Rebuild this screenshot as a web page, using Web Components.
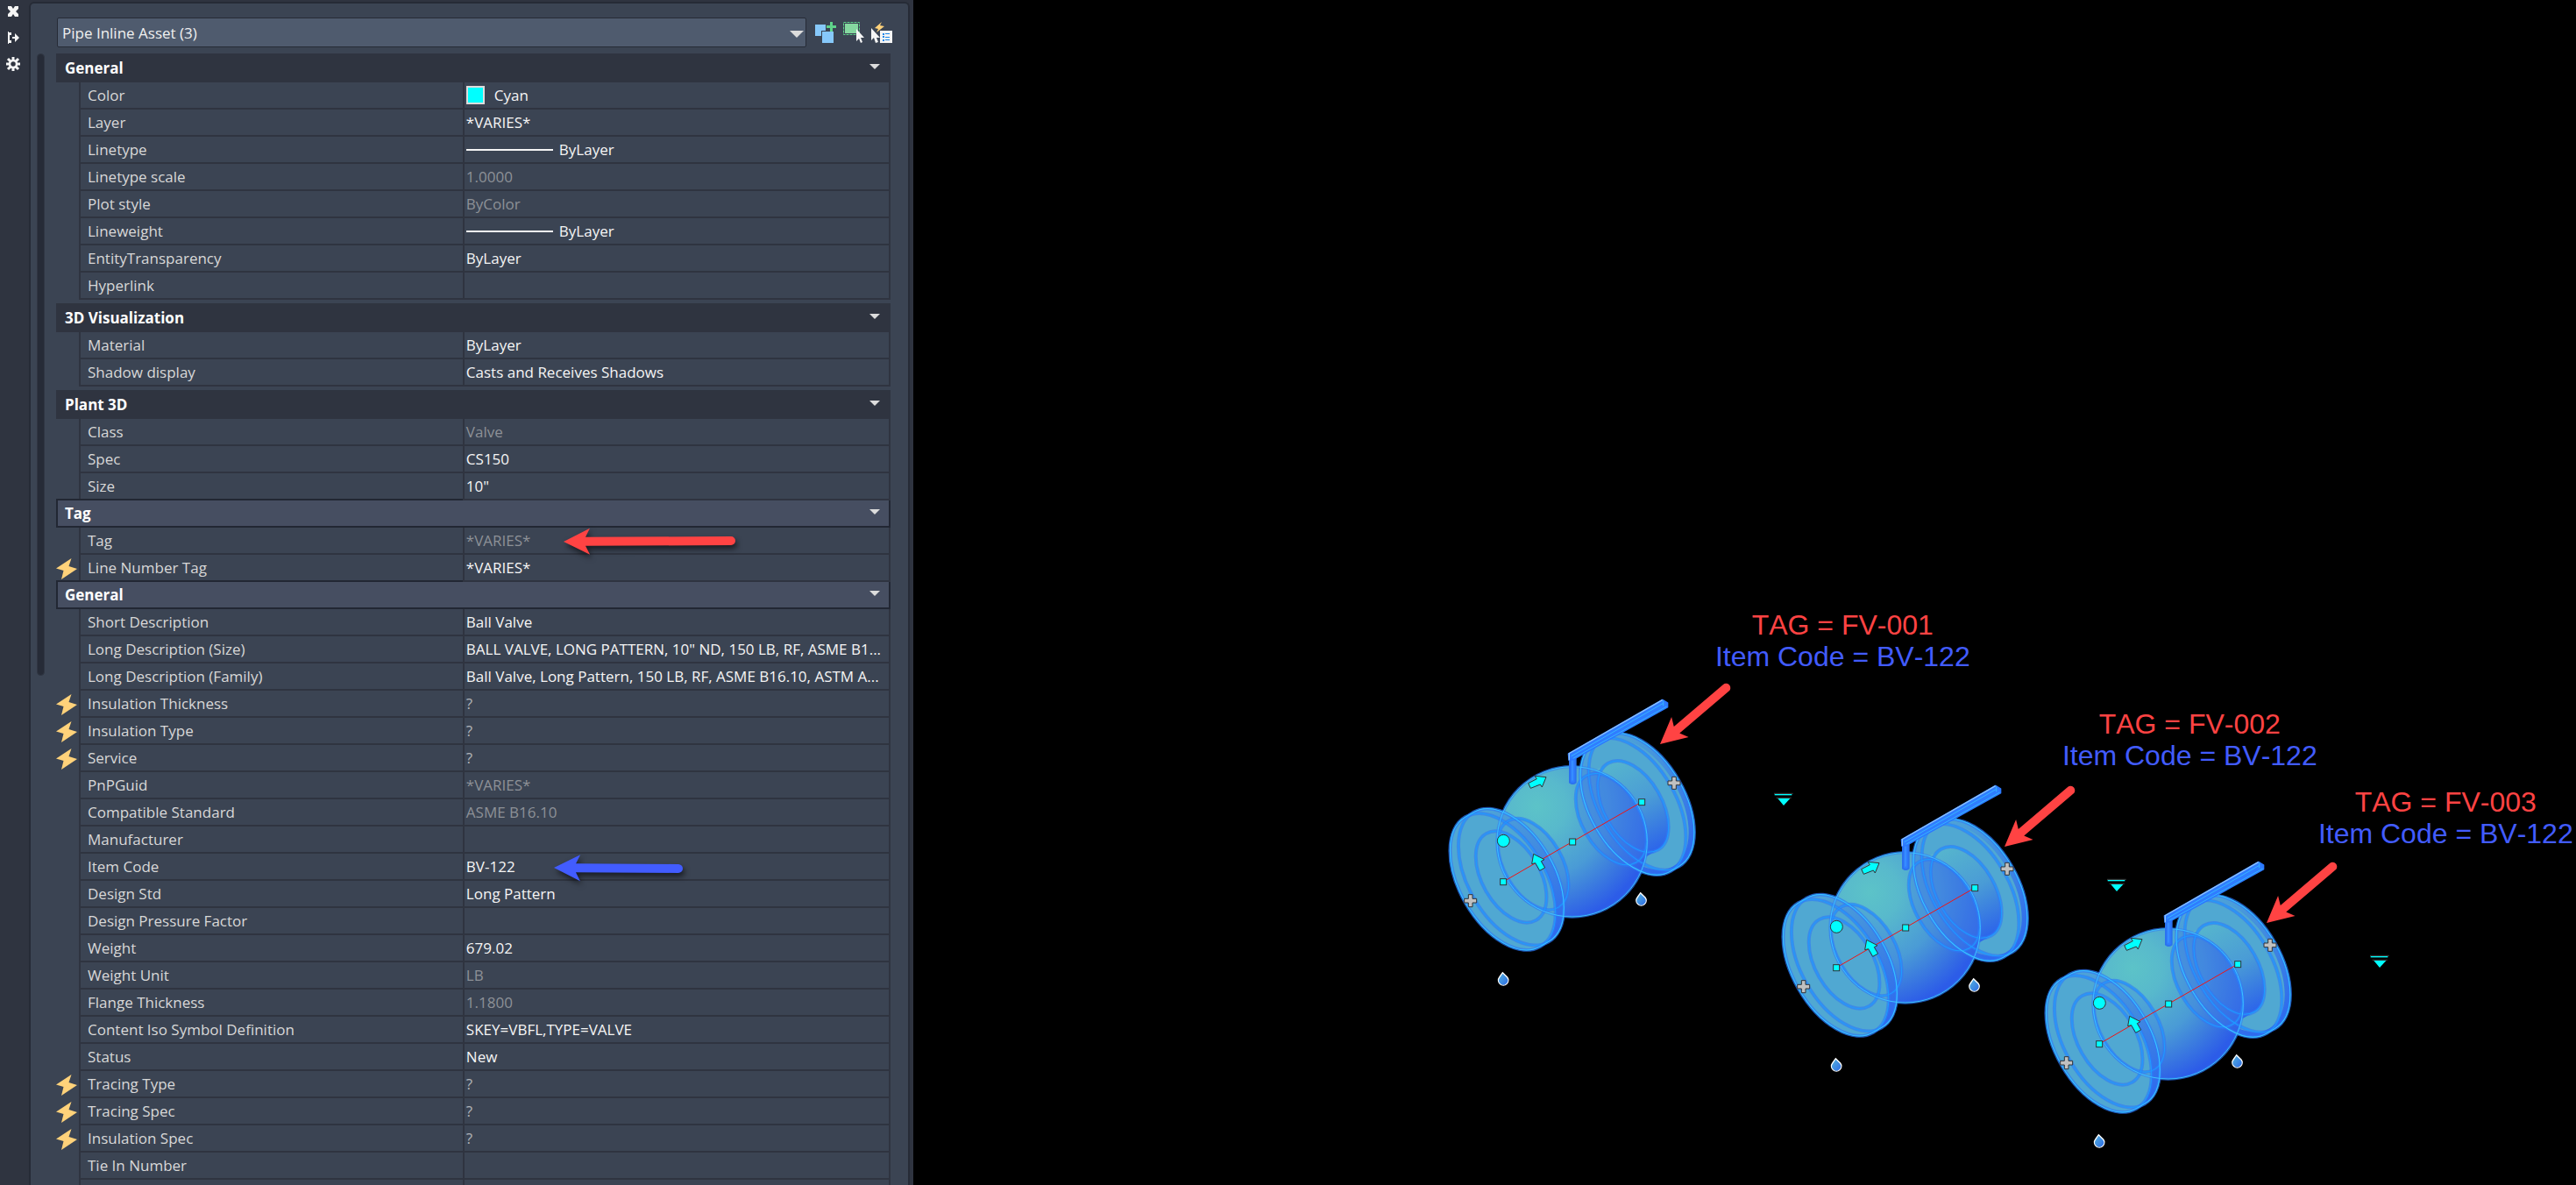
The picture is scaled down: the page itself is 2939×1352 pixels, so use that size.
<!DOCTYPE html>
<html lang="en">
<head>
<meta charset="utf-8">
<title>Properties</title>
<style>
    html, body {
        margin: 0;
        height: 100%;
    }

    body {
        overflow: hidden;
        background: #000;
        color: #f5f5f5;
        font: 17px/29px "Open Sans", "Noto Sans", sans-serif;
    }
</style>
</head>
<body>
<cad-app></cad-app>

<script>
const ICONS = {
    close: '<path d="M2 2h4l2 3 2-3h4v3l-3 3 3 3v3h-4l-2-3-2 3H2v-3l3-3-3-3z" fill="#f5f5f5"/>',
    pin: '<path d="M2 1h1v14H2zM3 2h3v3H4v6h2v3H3zM7 7h3V3l5 5-5 5V9H7z" fill="#f5f5f5"/>',
    gear: '<path d="M8 0v16M0 8h16M2 2l12 12M14 2L2 14" stroke="#f5f5f5" stroke-width="3"/><circle cx="8" cy="8" r="4" fill="#2f3440" stroke="#f5f5f5" stroke-width="2.5"/>',
    toggle: '<path d="M0 3h12v7H7v6H0z" fill="#86c8fa"/><path d="M8 11h13v13H8z" fill="#86c8fa"/><path d="M17 0h3v4h4v3h-4v4h-3V7h-4V4h4z" fill="#5fd38a"/>',
    select: '<rect x=".5" y=".5" width="18" height="14" fill="none" stroke="#5fd38a" stroke-dasharray="3 1"/><path d="M2 2h15v11H2z" fill="#85d8a0"/><path d="M15 8v14l3-3 2 5 2-1-2-5h4z" fill="#f5f5f5"/>',
    quick: '<path d="M12 0L4 7l4 1-2 4 9-7-5-1z" fill="#ffd27a"/><path d="M0 7v14l3-3 2 6 3-1-2-5h4z" fill="#f5f5f5"/><path d="M10 10h14v14H10z" fill="#f5f5f5"/><path d="M13 13h2v2h-2zM13 16h2v2h-2zM13 20h2v2h-2zM16 13h5v1h-5zM16 17h5v1h-5zM16 20h5v1h-5z" fill="#1c86e8"/>',
    bolt: '<path d="M17.500 0L0 11.500l8.500 2.500L6 24l18-12-9.500-3z" fill="#ffd27a"/>',
};

const icon = (name, size) => `<svg width="${size}" height="${size}" viewBox="0 0 ${size} ${size}" aria-hidden="true">${ICONS[name]}</svg>`;

const SECTIONS = [
    {
        heading: 'General',
        rows: [
            { name: 'Color', value: 'Cyan', sample: 'swatch' },
            { name: 'Layer', value: '*VARIES*' },
            { name: 'Linetype', value: 'ByLayer', sample: 'line' },
            { name: 'Linetype scale', value: '1.0000', state: 'disabled' },
            { name: 'Plot style', value: 'ByColor', state: 'disabled' },
            { name: 'Lineweight', value: 'ByLayer', sample: 'line' },
            { name: 'EntityTransparency', value: 'ByLayer' },
            { name: 'Hyperlink', value: '' },
        ],
    },
    {
        heading: '3D Visualization',
        rows: [
            { name: 'Material', value: 'ByLayer' },
            { name: 'Shadow display', value: 'Casts and Receives Shadows' },
        ],
    },
    {
        heading: 'Plant 3D',
        rows: [
            { name: 'Class', value: 'Valve', state: 'disabled' },
            { name: 'Spec', value: 'CS150' },
            { name: 'Size', value: '10"' },
        ],
        groups: [
            {
                heading: 'Tag',
                rows: [
                    { name: 'Tag', value: '*VARIES*', state: 'disabled', arrow: '<callout-arrow class="tag-arrow" dx="191" dy="-1" color="#ff4343"></callout-arrow>' },
                    { name: 'Line Number Tag', value: '*VARIES*', bolt: true },
                ],
            },
            {
                heading: 'General',
                rows: [
                    { name: 'Short Description', value: 'Ball Valve' },
                    { name: 'Long Description (Size)', value: 'BALL VALVE, LONG PATTERN, 10" ND, 150 LB, RF, ASME B1...' },
                    { name: 'Long Description (Family)', value: 'Ball Valve, Long Pattern, 150 LB, RF, ASME B16.10, ASTM A...' },
                    { name: 'Insulation Thickness', value: '?', state: 'unset', bolt: true },
                    { name: 'Insulation Type', value: '?', state: 'unset', bolt: true },
                    { name: 'Service', value: '?', state: 'unset', bolt: true },
                    { name: 'PnPGuid', value: '*VARIES*', state: 'disabled' },
                    { name: 'Compatible Standard', value: 'ASME B16.10', state: 'disabled' },
                    { name: 'Manufacturer', value: '' },
                    { name: 'Item Code', value: 'BV-122', arrow: '<callout-arrow class="code-arrow" dx="142" dy="1" color="#425cff"></callout-arrow>' },
                    { name: 'Design Std', value: 'Long Pattern' },
                    { name: 'Design Pressure Factor', value: '' },
                    { name: 'Weight', value: '679.02' },
                    { name: 'Weight Unit', value: 'LB', state: 'disabled' },
                    { name: 'Flange Thickness', value: '1.1800', state: 'disabled' },
                    { name: 'Content Iso Symbol Definition', value: 'SKEY=VBFL,TYPE=VALVE' },
                    { name: 'Status', value: 'New' },
                    { name: 'Tracing Type', value: '?', state: 'unset', bolt: true },
                    { name: 'Tracing Spec', value: '?', state: 'unset', bolt: true },
                    { name: 'Insulation Spec', value: '?', state: 'unset', bolt: true },
                    { name: 'Tie In Number', value: '' },
                    { name: '', value: '' },
                ],
            },
        ],
    },
];

// Arrow with its tip on the host's origin and its tail at (dx, dy)
class CalloutArrow extends HTMLElement {
    constructor() {
        super();
        this.attachShadow({ mode: 'open' });
    }

    connectedCallback() {
        const dx = Number(this.getAttribute('dx'));
        const dy = Number(this.getAttribute('dy'));
        const length = Math.round(Math.hypot(dx, dy));
        const angle = Math.atan2(dy, dx) * 180 / Math.PI;

        this.shadowRoot.innerHTML = `
        <style>
            :host {
                position: absolute;
                width: 1px;
                height: 1px;
                pointer-events: none;
            }

            svg {
                display: block;
                overflow: visible;
                filter: drop-shadow(2px 4px 3px rgba(0, 0, 0, 0.6));
            }
        </style>
        <svg width="1" height="1" aria-hidden="true">
            <path transform="rotate(${angle})" fill="${this.getAttribute('color')}"
                d="M0 0L30 -15L25 -5H${length}A5 5 0 0 1 ${length} 5H25L30 15Z"/>
        </svg>
        `;
    }
}

customElements.define('callout-arrow', CalloutArrow);

class PropertySection extends HTMLElement {
    constructor() {
        super();
        this.attachShadow({ mode: 'open' });
    }

    set section(section) {
        this.shadowRoot.innerHTML = `
        <style>
            :host {
                display: block;
            }

            :host([nested]) {
                margin-top: -2px;
            }

            .heading {
                display: flex;
                align-items: center;
                justify-content: space-between;
                box-sizing: border-box;
                width: 100%;
                height: 33px;
                padding: 0 10px 0 8px;
                border: 2px solid #2f3440;
                background: #2f3440;
                color: #fff;
                font: inherit;
                font-weight: 700;
                text-align: left;
            }

            :host([nested]) .heading {
                border-color: #222733;
                background: #464e61;
            }

            .heading svg {
                margin-bottom: 3px;
            }

            table {
                width: 100%;
                table-layout: fixed;
                border-spacing: 0;
            }

            .gutter {
                width: 26px;
            }

            .name-column {
                width: 46%;
            }

            th, td {
                box-sizing: border-box;
                height: 31px;
                padding: 0;
                line-height: 29px;
                text-align: left;
                font-weight: 400;
                white-space: nowrap;
            }

            th {
                padding-left: 8px;
                border: solid #2f3440;
                border-width: 0 0 2px 2px;
                color: #d8d8d8;
            }

            .value {
                position: relative;
                padding-left: 2px;
                border: solid #2f3440;
                border-width: 0 2px 2px;
            }

            .value.disabled {
                color: #8d9197;
            }

            .value.unset {
                color: #b0b3b8;
            }

            .bolt svg {
                display: block;
            }

            .content {
                display: flex;
                align-items: center;
                height: 29px;
            }

            .swatch {
                box-sizing: border-box;
                width: 21px;
                height: 21px;
                margin-right: 11px;
                border: 2px solid #dcdcdc;
                background: #0ff;
            }

            .line {
                width: 99px;
                height: 2px;
                margin-right: 7px;
                background: #f5f5f5;
            }

            callout-arrow {
                top: 16px;
            }

            .tag-arrow {
                left: 113px;
            }

            .code-arrow {
                left: 102px;
            }
        </style>
        <button class="heading" type="button" aria-expanded="true">
            <span>${section.heading}</span>
            <svg width="12" height="6" aria-hidden="true"><path d="M0 0h12L6 6z" fill="#dcdcdc"/></svg>
        </button>
        <table aria-label="${section.heading}">
            <colgroup><col class="gutter"><col class="name-column"><col></colgroup>
            <tbody>${section.rows.map((row) => this.renderRow(row)).join('')}</tbody>
        </table>
        <slot></slot>
        `;
    }

    renderRow(row) {
        return `<tr>
            <td class="bolt">${row.bolt ? icon('bolt', 24) : ''}</td>
            <th scope="row">${row.name}</th>
            <td class="value ${row.state || ''}">
                <div class="content">${row.sample ? `<span class="${row.sample}"></span>` : ''}<span>${row.value}</span></div>
                ${row.arrow || ''}
            </td>
        </tr>`;
    }
}

customElements.define('property-section', PropertySection);

class PropertyPalette extends HTMLElement {
    constructor() {
        super();
        this.attachShadow({ mode: 'open' });

        this.shadowRoot.innerHTML = `
        <style>
            :host {
                display: flex;
                box-sizing: border-box;
                padding: 2px 4px 0 0;
                background: #2f3440;
            }

            button {
                display: block;
                padding: 0;
                border: 0;
                background: none;
            }

            button svg {
                display: block;
            }

            .rail {
                display: flex;
                flex-direction: column;
                align-items: center;
                gap: 14px;
                flex: 0 0 31px;
                padding: 3px 1px 0 0;
                box-sizing: border-box;
            }

            .frame {
                display: flex;
                flex-direction: column;
                flex: 1;
                min-width: 0;
                margin-left: 2px;
                border: 2px solid #262b36;
                border-bottom: 0;
                border-radius: 6px 6px 0 0;
                background: #3b4453;
            }

            .toolbar {
                display: flex;
                align-items: center;
                gap: 8px;
                padding: 16px 18px 7px 30px;
            }

            .picker {
                position: relative;
                flex: 1;
                margin-right: 2px;
            }

            select {
                display: block;
                appearance: none;
                box-sizing: border-box;
                width: 100%;
                height: 34px;
                padding: 0 24px 0 5px;
                border: 1px solid #262b36;
                border-radius: 2px;
                background: #4f5b6e;
                color: #f0f0f0;
                font: inherit;
            }

            .caret {
                position: absolute;
                right: 3px;
                top: 15px;
            }

            .body {
                display: flex;
                flex: 1;
                min-height: 0;
                padding: 0 20px 0 7px;
                gap: 13px;
            }

            .thumb {
                flex: 0 0 9px;
                box-sizing: border-box;
                height: 55%;
                border: 1px solid #303643;
                border-radius: 5px;
                background: #262b37;
            }

            .sections {
                display: flex;
                flex-direction: column;
                gap: 4px;
                flex: 1;
                min-width: 0;
                overflow: hidden;
            }
        </style>
        <div class="rail">
            <button type="button" aria-label="Close">${icon('close', 16)}</button>
            <button type="button" aria-label="Auto-hide">${icon('pin', 16)}</button>
            <button type="button" aria-label="Settings">${icon('gear', 16)}</button>
        </div>
        <div class="frame">
            <div class="toolbar">
                <div class="picker">
                    <select aria-label="Selected objects"><option>Pipe Inline Asset (3)</option></select>
                    <svg class="caret" width="16" height="8" aria-hidden="true"><path d="M0 0h16L8 8z" fill="#dcdcdc"/></svg>
                </div>
                <button type="button" aria-label="Toggle PICKADD">${icon('toggle', 24)}</button>
                <button type="button" aria-label="Select objects">${icon('select', 24)}</button>
                <button type="button" aria-label="Quick select">${icon('quick', 24)}</button>
            </div>
            <div class="body">
                <div class="thumb"></div>
                <div class="sections"></div>
            </div>
        </div>
        `;

        const sections = this.shadowRoot.querySelector('.sections');
        SECTIONS.forEach((section) => sections.append(this.createSection(section)));
    }

    createSection(section) {
        const element = document.createElement('property-section');
        element.section = section;
        (section.groups || []).forEach((group) => {
            const nested = this.createSection(group);
            nested.setAttribute('nested', '');
            element.append(nested);
        });
        return element;
    }
}

customElements.define('property-palette', PropertyPalette);

// One selected ball valve with its grips
class CadValve extends HTMLElement {
    constructor() {
        super();
        this.attachShadow({ mode: 'open' });

        // Ellipses and cylinders are laid out along the pipe axis, which is then turned by 30 degrees
        const ring = (x, rx, ry) => `<ellipse cx="${x}" cy="0" rx="${rx}" ry="${ry}"/>`;
        const drum = (x0, x1, rx, ry) => `<path d="M${x0} ${-ry}A${rx} ${ry} 0 0 0 ${x0} ${ry}L${x1} ${ry}A${rx} ${ry} 0 0 0 ${x1} ${-ry}Z"/>`;
        const shell = (x0, x1, rx, ry) => `<path d="M${x0} ${-ry}A${rx} ${ry} 0 0 0 ${x0} ${ry}L${x1} ${ry}A${rx} ${ry} 0 0 0 ${x1} ${-ry}Z"/>`;
        const rings = `${ring(-274, 147, 256)}${ring(-241, 147, 256)}${ring(-241, 99, 171)}${ring(-154, 99, 171)}
            ${ring(154, 99, 171)}${ring(241, 99, 171)}${ring(241, 147, 256)}${ring(274, 147, 256)}`;
        const outline = `<g transform="translate(491 541) rotate(-30)">${shell(-274, -241, 147, 256)}${shell(241, 274, 147, 256)}</g><circle cx="491" cy="541" r="257"/>`;
        const grip = (x, y) => `<rect x="${x - 10}" y="${y - 10}" width="21" height="21"/>`;
        const cross = (x, y) => `<path d="M${x - 7} ${y - 21}h14v14h14v14h-14v14h-14v-14h-14v-14h14z"/>`;
        const drop = (x, y) => `<path d="M${x - 3} ${y - 26}L${x + 13} ${y - 10}A17 17 0 1 1 ${x - 14} ${y - 10}Z"/>`;

        this.shadowRoot.innerHTML = `
        <style>
            :host {
                position: absolute;
            }

            svg {
                display: block;
            }
        </style>
        <svg width="420" height="370" viewBox="0 0 1260 1110" role="img" aria-label="Ball valve">
            <defs>
                <radialGradient id="ball" gradientUnits="userSpaceOnUse" cx="370" cy="420" r="410">
                    <stop offset="0" stop-color="#5cc3c8"/>
                    <stop offset=".25" stop-color="#58b9cc"/>
                    <stop offset=".6" stop-color="#4a9bd6"/>
                    <stop offset="1" stop-color="#2c5ce8"/>
                </radialGradient>
                <linearGradient id="rim" x1="0" y1="0" x2="0" y2="1">
                    <stop offset="0" stop-color="#4fa5d6"/>
                    <stop offset="1" stop-color="#2e68ee"/>
                </linearGradient>
                <linearGradient id="hub" x1="0" y1="0" x2="0" y2="1">
                    <stop offset="0" stop-color="#56b5cd"/>
                    <stop offset=".5" stop-color="#4a9cd6"/>
                    <stop offset="1" stop-color="#2c64ea"/>
                </linearGradient>
                <linearGradient id="water" x1="0" y1="0" x2="1" y2="1">
                    <stop offset="0" stop-color="#56b5dd"/>
                    <stop offset="1" stop-color="#2c6ae6"/>
                </linearGradient>
                <clipPath id="inBall"><circle cx="491" cy="541" r="257"/></clipPath>
            </defs>

            <g fill="none" stroke="#1f6cff" stroke-opacity=".35" stroke-width="10">${outline}</g>

            <g transform="translate(491 541) rotate(-30)">
                <g fill="url(#rim)">${drum(241, 274, 147, 256)}${ring(274, 147, 256)}</g>
                <g fill="#50a8d2">${ring(257, 146, 246)}</g>
                <g fill="url(#hub)">${drum(154, 241, 99, 171)}${ring(241, 99, 171)}</g>
            </g>
            <circle cx="491" cy="541" r="257" fill="url(#ball)"/>
            <g clip-path="url(#inBall)">
                <g transform="translate(491 541) rotate(-30)" fill="#3a78e8" fill-opacity=".3">${drum(241, 274, 147, 256)}${drum(154, 241, 99, 171)}</g>
            </g>
            <g transform="translate(491 541) rotate(-30)">
                <g fill="#3a7fe8" fill-opacity=".3">${ring(-154, 99, 171)}</g>
                <g fill="url(#rim)">${drum(-274, -241, 147, 256)}${ring(-241, 147, 256)}</g>
                <g fill="#50a8d2">${ring(-274, 147, 256)}</g>
            </g>

            <g transform="translate(491 541) rotate(-30)" fill="none" stroke="#2f78f8" stroke-opacity=".6" stroke-width="12">${rings}</g>
            <g transform="translate(491 541) rotate(-30)" fill="none" stroke="#1e9cff" stroke-width="3">${rings}</g>
            <circle cx="491" cy="541" r="257" fill="none" stroke="#2f78f8" stroke-opacity=".5" stroke-width="10"/>
            <g fill="none" stroke="#3cc4ff" stroke-width="3">${outline}</g>

            <g stroke-linejoin="round">
                <path d="M483 250h20v88q-10 8-20 0z" fill="#2f7dff" stroke="#2b72f0" stroke-width="6"/>
                <path d="M492 262v70" stroke="#3f9dff" stroke-width="3"/>
                <path d="M479 240L800 56l17 10v14L497 258l-16 4z" fill="#2f7dff" stroke="#2b78ff" stroke-width="6"/>
                <path d="M479 240L800 56M481 262v-22" fill="none" stroke="#8fc4ff" stroke-width="4"/>
                <path d="M488 248L803 67M494 256L815 78M803 58v18" fill="none" stroke="#35b4ff" stroke-width="3"/>
            </g>

            <path d="M255 678L492 541L729 405" fill="none" stroke="#f01414" stroke-width="3"/>
            <g fill="#0ff" stroke="#303338" stroke-width="3">
                ${grip(255, 678)}${grip(492, 541)}${grip(729, 405)}
                <circle cx="256" cy="538" r="21"/>
                <path d="M341 341l29-15-7-10 39 4-14 34-6-9-33 13z"/>
                <path d="M359 583l37 19-11 6 13 22-18 10-15-26-12 3z"/>
            </g>
            <g fill="#c0c0c0" stroke="#303338" stroke-width="3">${cross(840, 340)}${cross(143, 743)}</g>
            <g fill="url(#water)" stroke="#fff" stroke-width="4">${drop(728, 742)}${drop(256, 1015)}</g>

            <path d="M1182 376h65M1190 391h51" stroke="#404040" stroke-width="3"/>
            <path d="M1184 380h59" stroke="#0ff" stroke-width="4"/>
            <path d="M1195 393h42l-22 24z" fill="#0ff"/>
        </svg>
        `;
    }
}

customElements.define('cad-valve', CadValve);

class ValveLabel extends HTMLElement {
    constructor() {
        super();
        this.attachShadow({ mode: 'open' });

        this.shadowRoot.innerHTML = `
        <style>
            :host {
                position: absolute;
                font: 32px/36px "Liberation Sans", Arial, sans-serif;
                font-kerning: none;
                text-align: center;
                white-space: nowrap;
            }

            .tag {
                color: #ff4343;
            }

            .code {
                color: #425cff;
            }
        </style>
        <div class="tag"><slot name="tag"></slot></div>
        <div class="code"><slot name="code"></slot></div>
        `;
    }
}

customElements.define('valve-label', ValveLabel);

class ModelViewport extends HTMLElement {
    constructor() {
        super();
        this.attachShadow({ mode: 'open' });

        const valves = [
            { tag: 'FV-001', at: [588, 780], arrow: [852, 849], label: [915, 695] },
            { tag: 'FV-002', at: [968, 878], arrow: [1245, 966], label: [1311, 808] },
            { tag: 'FV-003', at: [1268, 965], arrow: [1544, 1053], label: [1603, 897] },
        ];
        const place = ([x, y]) => `style="left: ${x}px; top: ${y}px"`;

        this.shadowRoot.innerHTML = `
        <style>
            :host {
                display: block;
                position: relative;
                overflow: hidden;
                background: #000;
            }
        </style>
        ${valves.map((valve) => `
            <cad-valve ${place(valve.at)}></cad-valve>
            <callout-arrow ${place(valve.arrow)} dx="75" dy="-64" color="#ff4343"></callout-arrow>
            <valve-label ${place(valve.label)}>
                <span slot="tag">TAG = ${valve.tag}</span>
                <span slot="code">Item Code = BV-122</span>
            </valve-label>
        `).join('')}
        `;
    }
}

customElements.define('model-viewport', ModelViewport);

class CadApp extends HTMLElement {
    constructor() {
        super();
        this.attachShadow({ mode: 'open' });

        this.shadowRoot.innerHTML = `
        <style>
            :host {
                display: flex;
                height: 100vh;
            }

            property-palette {
                flex: 0 0 35.45%;
                min-width: 640px;
            }

            model-viewport {
                flex: 1;
            }
        </style>
        <property-palette></property-palette>
        <model-viewport></model-viewport>
        `;
    }
}

customElements.define('cad-app', CadApp);
</script>
</body>
</html>
